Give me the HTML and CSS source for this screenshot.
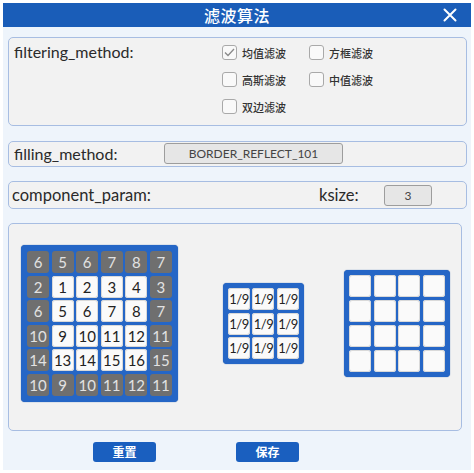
FILE: index.html
```html
<!DOCTYPE html>
<html lang="zh">
<head>
<meta charset="utf-8">
<title>滤波算法</title>
<link rel="stylesheet" href="styles.css">
</head>
<body>
<div class="window">
  <div class="titlebar">
    <span class="title">滤波算法</span>
    <svg class="close" width="14" height="14" viewBox="0 0 14 14"><path d="M1.5 1.5 L12.5 12.5 M12.5 1.5 L1.5 12.5" stroke="#fff" stroke-width="2" stroke-linecap="round" fill="none"/></svg>
  </div>
  <div class="content">
    <div class="panel panel-filter">
      <div class="label">filtering_method:</div>
      <div class="checks">
        <label class="check"><span class="box checked"><svg width="11" height="9" viewBox="0 0 11 9"><path d="M1 4.5 L4 7.5 L10 1" stroke="#8a8a8a" stroke-width="1.3" fill="none"/></svg></span><span class="ctext">均值滤波</span></label>
        <label class="check"><span class="box"></span><span class="ctext">方框滤波</span></label>
        <label class="check"><span class="box"></span><span class="ctext">高斯滤波</span></label>
        <label class="check"><span class="box"></span><span class="ctext">中值滤波</span></label>
        <label class="check"><span class="box"></span><span class="ctext">双边滤波</span></label>
      </div>
    </div>
    <div class="panel panel-fill">
      <div class="label">filling_method:</div>
      <div class="combo">BORDER_REFLECT_101</div>
    </div>
    <div class="panel panel-param">
      <div class="label">component_param:</div>
      <div class="ksize-label label">ksize:</div>
      <div class="ksize">3</div>
    </div>
    <div class="panel panel-grids">
      <div class="grid grid6">
        <div class="cell g">6</div><div class="cell g">5</div><div class="cell g">6</div><div class="cell g">7</div><div class="cell g">8</div><div class="cell g">7</div>
        <div class="cell g">2</div><div class="cell w">1</div><div class="cell w">2</div><div class="cell w">3</div><div class="cell w">4</div><div class="cell g">3</div>
        <div class="cell g">6</div><div class="cell w">5</div><div class="cell w">6</div><div class="cell w">7</div><div class="cell w">8</div><div class="cell g">7</div>
        <div class="cell g">10</div><div class="cell w">9</div><div class="cell w">10</div><div class="cell w">11</div><div class="cell w">12</div><div class="cell g">11</div>
        <div class="cell g">14</div><div class="cell w">13</div><div class="cell w">14</div><div class="cell w">15</div><div class="cell w">16</div><div class="cell g">15</div>
        <div class="cell g">10</div><div class="cell g">9</div><div class="cell g">10</div><div class="cell g">11</div><div class="cell g">12</div><div class="cell g">11</div>
      </div>
      <div class="grid grid3">
        <div class="cell w k">1/9</div><div class="cell w k">1/9</div><div class="cell w k">1/9</div>
        <div class="cell w k">1/9</div><div class="cell w k">1/9</div><div class="cell w k">1/9</div>
        <div class="cell w k">1/9</div><div class="cell w k">1/9</div><div class="cell w k">1/9</div>
      </div>
      <div class="grid grid4">
        <div class="cell w"></div><div class="cell w"></div><div class="cell w"></div><div class="cell w"></div>
        <div class="cell w"></div><div class="cell w"></div><div class="cell w"></div><div class="cell w"></div>
        <div class="cell w"></div><div class="cell w"></div><div class="cell w"></div><div class="cell w"></div>
        <div class="cell w"></div><div class="cell w"></div><div class="cell w"></div><div class="cell w"></div>
      </div>
    </div>
    <div class="buttons">
      <button class="btn btn-reset">重置</button>
      <button class="btn btn-save">保存</button>
    </div>
  </div>
</div>
</body>
</html>
```
FILE: styles.css
```css
* { box-sizing: border-box; }
html, body { margin: 0; padding: 0; background: #ffffff; }
body { font-family: Lato, "Noto Sans", "Noto Sans CJK SC", sans-serif; color: #2b2b2b; }

.window {
  margin: 3px 3px 0 3px;
  width: 468px;
  height: 467px;
  background: #eef4fb;
  display: flex;
  flex-direction: column;
}

.titlebar {
  height: 24px;
  background: #1a5db8;
  display: flex;
  align-items: center;
  justify-content: center;
  position: relative;
}
.title {
  color: #ffffff;
  font-family: "Noto Sans CJK SC", sans-serif;
  font-size: 16px;
  font-weight: 500;
  letter-spacing: 0.5px;
  line-height: 24px;
}
.close {
  position: absolute;
  right: 14px;
  top: 5px;
}

.content {
  padding: 10px 4px 0 5px;
  display: flex;
  flex-direction: column;
}

.panel {
  background: #f2f2f2;
  border: 1px solid #a7bde2;
  border-radius: 5px;
}

.label {
  font-family: Lato, "Noto Sans", sans-serif;
  font-size: 16px;
  color: #2a2a2a;
}

.panel-filter {
  height: 89px;
  display: flex;
  padding: 4px 0 0 5px;
}
.panel-filter .label { width: 208px; }
.checks {
  display: grid;
  grid-template-columns: 87px 87px;
  grid-auto-rows: 27px;
  margin-top: -3px;
}
.check {
  display: flex;
  align-items: center;
  gap: 5px;
  height: 27px;
}
.box {
  width: 15px;
  height: 15px;
  border: 1px solid #a9a9a9;
  border-radius: 3px;
  background: #f9f9f9;
  display: flex;
  align-items: center;
  justify-content: center;
}
.ctext {
  font-family: "Noto Sans CJK SC", sans-serif;
  font-size: 11px;
  font-weight: 500;
  color: #333;
}

.panel-fill {
  margin-top: 15px;
  height: 26px;
  display: flex;
  align-items: flex-start;
  padding: 2px 0 0 5px;
}
.panel-fill .label { width: 150px; line-height: 20px; }
.combo {
  margin-top: -1px;
  width: 179px;
  height: 21px;
  background: #e6e6e6;
  border: 1px solid #9d9d9d;
  border-radius: 3px;
  font-family: Lato, sans-serif;
  font-size: 12px;
  color: #444;
  display: flex;
  align-items: center;
  justify-content: center;
}

.panel-param {
  margin-top: 14px;
  height: 28px;
  display: flex;
  align-items: center;
  padding: 0 0 0 3px;
}
.panel-param .label { font-size: 16.5px; }
.panel-param .label:first-child { width: 307px; }
.ksize-label { width: 65px; }
.ksize {
  width: 48px;
  height: 21px;
  background: #e6e6e6;
  border: 1px solid #9d9d9d;
  border-radius: 3px;
  font-size: 12px;
  color: #444;
  display: flex;
  align-items: center;
  justify-content: center;
}

.panel-grids {
  margin-top: 14px;
  height: 208px;
  width: 454px;
  display: flex;
  align-items: center;
  padding: 0 0 7px 12px;
}

.grid {
  display: grid;
  background: #2566c6;
  border-radius: 4px;
  padding: 5px;
  gap: 2.6px;
  box-shadow: 0 0 1px #1a4f9e;
}
.grid6 {
  grid-template-columns: repeat(6, 22px);
  grid-auto-rows: 22px;
  padding: 6px;
}
.grid3 {
  margin-left: 45px;
  grid-template-columns: repeat(3, 22px);
  grid-auto-rows: 22px;
  gap: 2.5px;
}
.grid4 {
  margin-left: 40px;
  grid-template-columns: repeat(4, 22px);
  grid-auto-rows: 22px;
  gap: 2.7px;
}

.cell {
  border-radius: 3px;
  display: flex;
  align-items: center;
  justify-content: center;
  font-family: Lato, sans-serif;
  font-size: 15px;
}
.cell.g { background: #6f6f6f; color: #e2e2e2; }
.cell.w { background: #fafafa; color: #222; box-shadow: inset 0 0 0 1px #d9d9d9; }
.cell.k { font-size: 13px; letter-spacing: -0.5px; }

.buttons {
  display: flex;
  padding: 11px 0 0 85px;
  gap: 80px;
}
.btn {
  width: 63px;
  height: 20px;
  background: #1a5fbf;
  border: none;
  border-radius: 3px;
  color: #ffffff;
  font-family: "Noto Sans CJK SC", sans-serif;
  font-size: 12px;
  font-weight: 700;
  padding: 0;
  line-height: 20px;
}
```
